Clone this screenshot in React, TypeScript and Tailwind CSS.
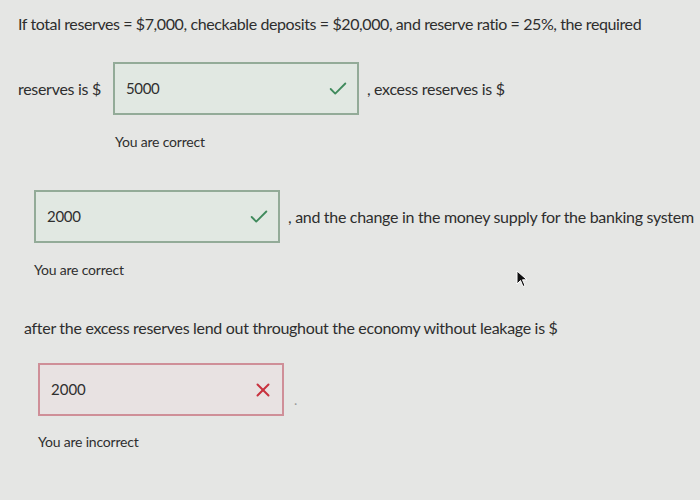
import { Check, X } from "lucide-react";

function AnswerBox({ value, correct }: { value: string; correct: boolean }) {
  return (
    <div
      className={`flex h-[53px] w-[246px] items-center justify-between border-2 pl-[11px] pr-[8px] ${
        correct ? "border-[#93ab98] bg-[#e1e8e2]" : "border-[#cf8f98] bg-[#e8e2e2]"
      }`}
    >
      <span className="text-[15px] text-[#2f2f2f]">{value}</span>
      {correct ? (
        <Check className="h-[22px] w-[22px] text-[#3f8a5c]" strokeWidth={2} />
      ) : (
        <X className="h-[22px] w-[22px] text-[#c8323f]" strokeWidth={2.2} />
      )}
    </div>
  );
}

export default function App() {
  return (
    <main
      className="relative h-[500px] w-[700px] overflow-hidden bg-[#e5e6e4] text-[#2e2e2e]"
      style={{ fontFamily: "Lato, 'Open Sans', sans-serif" }}
    >
      <p className="pl-[18px] pt-[12px] text-[16px] tracking-[-0.4px]">
        If total reserves = $7,000, checkable deposits = $20,000, and reserve ratio = 25%, the required
      </p>

      {/* row 1 */}
      <div className="mt-[26px] flex items-center pl-[18px] text-[16px] tracking-[-0.3px]">
        <span>reserves is $</span>
        <div className="ml-[12px]">
          <AnswerBox value="5000" correct />
        </div>
        <span className="ml-[8px]">, excess reserves is $</span>
      </div>
      <p className="ml-[115px] mt-[16px] text-[14px] tracking-[-0.2px]">You are correct</p>

      {/* row 2 */}
      <div className="mt-[38px] flex items-center pl-[34px] text-[16px] tracking-[-0.3px]">
        <AnswerBox value="2000" correct />
        <span className="ml-[8px]">, and the change in the money supply for the banking system</span>
      </div>
      <p className="ml-[34px] mt-[16px] text-[14px] tracking-[-0.2px]">You are correct</p>

      {/* row 3 */}
      <p className="ml-[24px] mt-[36px] text-[16px] tracking-[-0.3px]">
        after the excess reserves lend out throughout the economy without leakage is $
      </p>
      <div className="ml-[38px] mt-[23px] flex items-end">
        <AnswerBox value="2000" correct={false} />
        <span className="mb-[6px] ml-[10px] text-[14px] text-[#9a9a9a]">.</span>
      </div>
      <p className="ml-[38px] mt-[15px] text-[14px] tracking-[-0.2px]">You are incorrect</p>

      {/* mouse pointer */}
      <svg className="absolute left-[516px] top-[270px]" width="12" height="18" viewBox="0 0 12 18">
        <path d="M1 1 L1 14 L4.5 10.5 L7 16.5 L9 15.5 L6.5 9.8 L11 9.8 Z" fill="#111" stroke="#fff" strokeWidth="1" />
      </svg>
    </main>
  );
}
